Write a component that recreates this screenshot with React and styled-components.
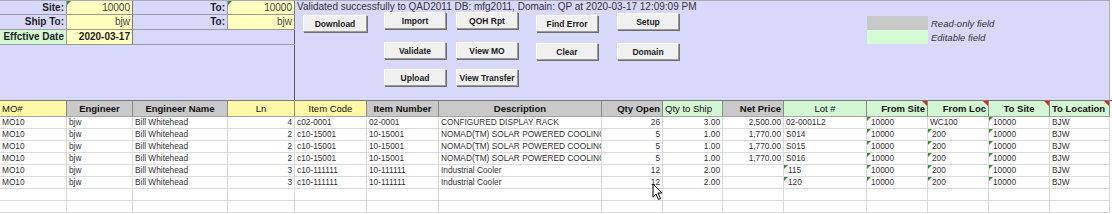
import React from "react";
import styled, { createGlobalStyle, css } from "styled-components";

const GlobalStyle = createGlobalStyle`
  body {
    margin: 0;
    background: #fff;
    font-family: "Liberation Sans", Arial, sans-serif;
    color: #333;
  }
`;

const tones = {
  yellow: "#fff8a6",
  gray: "#c9c9c9",
  green: "#d3f7d3",
};

const columns = [
  { key: "mo", label: "MO#", w: 67, tone: "yellow", align: "left" },
  { key: "eng", label: "Engineer", w: 66, tone: "gray", align: "center", bold: true },
  { key: "name", label: "Engineer Name", w: 95, tone: "gray", align: "center", bold: true },
  { key: "ln", label: "Ln", w: 67, tone: "yellow", align: "center", num: true },
  { key: "code", label: "Item Code", w: 72, tone: "yellow", align: "center" },
  { key: "item", label: "Item Number", w: 72, tone: "gray", align: "center", bold: true },
  { key: "desc", label: "Description", w: 163, tone: "gray", align: "center", bold: true },
  { key: "open", label: "Qty Open", w: 61, tone: "gray", align: "right", bold: true, num: true },
  { key: "ship", label: "Qty to Ship", w: 60, tone: "green", align: "left", num: true },
  { key: "price", label: "Net Price", w: 61, tone: "gray", align: "right", bold: true, num: true },
  { key: "lot", label: "Lot #", w: 83, tone: "green", align: "center" },
  { key: "fromSite", label: "From Site", w: 61, tone: "green", align: "right", bold: true, note: true },
  { key: "fromLoc", label: "From Loc", w: 61, tone: "green", align: "right", bold: true, note: true },
  { key: "toSite", label: "To Site", w: 61, tone: "green", align: "center", bold: true, note: true },
  { key: "toLoc", label: "To Location", w: 60, tone: "green", align: "left", bold: true, note: true },
];

const cooling = "NOMAD(TM) SOLAR POWERED COOLING";

const rows = [
  { mo: "MO10", eng: "bjw", name: "Bill Whitehead", ln: "4", code: "c02-0001", item: "02-0001", desc: "CONFIGURED DISPLAY RACK", open: "26", ship: "3.00", price: "2,500.00", lot: "02-0001L2", fromSite: "10000", fromLoc: "WC100", toSite: "10000", toLoc: "BJW" },
  { mo: "MO10", eng: "bjw", name: "Bill Whitehead", ln: "2", code: "c10-15001", item: "10-15001", desc: cooling, open: "5", ship: "1.00", price: "1,770.00", lot: "S014", fromSite: "10000", fromLoc: "200", toSite: "10000", toLoc: "BJW" },
  { mo: "MO10", eng: "bjw", name: "Bill Whitehead", ln: "2", code: "c10-15001", item: "10-15001", desc: cooling, open: "5", ship: "1.00", price: "1,770.00", lot: "S015", fromSite: "10000", fromLoc: "200", toSite: "10000", toLoc: "BJW" },
  { mo: "MO10", eng: "bjw", name: "Bill Whitehead", ln: "2", code: "c10-15001", item: "10-15001", desc: cooling, open: "5", ship: "1.00", price: "1,770.00", lot: "S016", fromSite: "10000", fromLoc: "200", toSite: "10000", toLoc: "BJW" },
  { mo: "MO10", eng: "bjw", name: "Bill Whitehead", ln: "3", code: "c10-111111", item: "10-111111", desc: "Industrial Cooler", open: "12", ship: "2.00", price: "", lot: "115", fromSite: "10000", fromLoc: "200", toSite: "10000", toLoc: "BJW" },
  { mo: "MO10", eng: "bjw", name: "Bill Whitehead", ln: "3", code: "c10-111111", item: "10-111111", desc: "Industrial Cooler", open: "12", ship: "2.00", price: "", lot: "120", fromSite: "10000", fromLoc: "200", toSite: "10000", toLoc: "BJW" },
  {},
  {},
];

// numbers stored as text get the little green corner
const textFlag = (key, value) =>
  ["lot", "fromSite", "fromLoc", "toSite"].includes(key) && /^\d+$/.test(value || "");

const buttons = [
  { label: "Download", col: 1, row: 1, w: 64, drop: 3 },
  { label: "Import", col: 2, row: 1 },
  { label: "QOH Rpt", col: 3, row: 1 },
  { label: "Find Error", col: 4, row: 1, drop: 3 },
  { label: "Setup", col: 5, row: 1, drop: 1 },
  { label: "Validate", col: 2, row: 2 },
  { label: "View MO", col: 3, row: 2 },
  { label: "Clear", col: 4, row: 2, drop: 1 },
  { label: "Domain", col: 5, row: 2, drop: 1 },
  { label: "Upload", col: 2, row: 3 },
  { label: "View Transfer", col: 3, row: 3 },
];

const gridCols = columns.map(c => `${c.w}px`).join(" ");

const App = () => {
  return (
    <>
      <GlobalStyle />
      <Sheet>
        <Panel>
          <FormPanel>
            <FormCell>Site:</FormCell>
            <InputCell $flag>10000</InputCell>
            <FormCell>To:</FormCell>
            <InputCell $flag>10000</InputCell>

            <FormCell>Ship To:</FormCell>
            <InputCell>bjw</InputCell>
            <FormCell>To:</FormCell>
            <InputCell>bjw</InputCell>

            <FormCell $green>Effctive Date</FormCell>
            <InputCell $bold>2020-03-17</InputCell>
            <FormCell $span={2} />
          </FormPanel>

          <ActionPanel>
            <Status>
              Validated successfully to QAD2011 DB: mfg2011, Domain: QP at 2020-03-17 12:09:09 PM
            </Status>
            <ActionBody>
              <ButtonGrid>
                {buttons.map(b => (
                  <SheetButton
                    key={b.label}
                    $col={b.col}
                    $row={b.row}
                    $w={b.w || 62}
                    $drop={b.drop || 0}
                  >
                    {b.label}
                  </SheetButton>
                ))}
              </ButtonGrid>
              <Legend>
                <Swatch $color="#c8c8c8" />
                <LegendText>Read-only field</LegendText>
                <Swatch $color="#d4fbd4" />
                <LegendText>Editable field</LegendText>
              </Legend>
            </ActionBody>
          </ActionPanel>
        </Panel>

        <Table>
          <HeadRow>
            {columns.map(c => (
              <HeadCell
                key={c.key}
                $tone={c.tone}
                $align={c.align}
                $bold={c.bold}
                $note={c.note}
              >
                {c.label}
              </HeadCell>
            ))}
          </HeadRow>
          {rows.map((r, i) => (
            <DataRow key={i}>
              {columns.map(c => (
                <DataCell
                  key={c.key}
                  $num={c.num}
                  $flag={textFlag(c.key, r[c.key])}
                >
                  {r[c.key]}
                </DataCell>
              ))}
            </DataRow>
          ))}
        </Table>

        <Cursor width="12" height="18" viewBox="0 0 12 18">
          <path
            d="M1 1 L1 14 L4 11 L6.5 16.5 L8.5 15.5 L6 10 L10 10 Z"
            fill="#fff"
            stroke="#000"
            strokeWidth="1"
            strokeLinejoin="round"
          />
        </Cursor>
      </Sheet>
    </>
  );
};

export default App;

const Sheet = styled.div`
  position: relative;
  width: 1112px;
  height: 214px;
  overflow: hidden;
  background: #fff;
`;

const Panel = styled.div`
  display: flex;
  width: 1110px;
  height: 100px;
  box-sizing: border-box;
  background: #d8d8fb;
  border-top: 1px solid #a9a9b8;
  border-right: 1px solid #b4b4c0;
`;

const FormPanel = styled.div`
  display: grid;
  grid-template-columns: 67px 66px 95px 67px;
  grid-template-rows: 14px 15px 15px;
  align-content: start;
  width: 295px;
  height: 100%;
  box-sizing: border-box;
  border-right: 1px solid #5a5a66;
`;

const FormCell = styled.div`
  grid-column: span ${props => props.$span || 1};
  box-sizing: border-box;
  padding: 0 2px;
  border-right: 1px solid #9a9aaa;
  border-bottom: 1px solid #9a9aaa;
  background: ${props => (props.$green ? "#d4fad4" : "transparent")};
  font-size: 10px;
  font-weight: bold;
  line-height: 13px;
  text-align: right;
  color: #1e1e1e;
  white-space: nowrap;
  &:last-child {
    border-right: none;
  }
`;

const InputCell = styled.div`
  position: relative;
  box-sizing: border-box;
  padding: 0 2px;
  border-right: 1px solid #7d7d6a;
  border-bottom: 1px solid #9a9a88;
  background: #ffffbf;
  font-size: 10px;
  font-weight: ${props => (props.$bold ? "bold" : "normal")};
  line-height: 13px;
  text-align: right;
  color: ${props => (props.$bold ? "#1e1e1e" : "#4a4a4a")};
  ${props =>
    props.$flag &&
    css`
      &::before {
        content: "";
        position: absolute;
        top: 0;
        left: 0;
        border-top: 4px solid #2f8f2f;
        border-right: 4px solid transparent;
      }
    `}
`;

const ActionPanel = styled.div`
  display: flex;
  flex-direction: column;
  flex: 1;
  padding-left: 2px;
`;

const Status = styled.div`
  height: 11px;
  font-size: 10px;
  line-height: 11px;
  color: #333;
  white-space: nowrap;
`;

const ActionBody = styled.div`
  display: flex;
  align-items: flex-start;
  padding-left: 6px;
`;

const ButtonGrid = styled.div`
  display: grid;
  grid-template-columns: 81px 72px 80px 81px 62px;
  grid-template-rows: 30px 27px 17px;
  align-items: start;
`;

const SheetButton = styled.button`
  grid-column: ${props => props.$col};
  grid-row: ${props => props.$row};
  width: ${props => props.$w}px;
  height: 17px;
  margin-top: ${props => props.$drop}px;
  padding: 0;
  box-sizing: border-box;
  background: #f0f0f0;
  border: 1px solid;
  border-color: #ffffff #9a9a9a #9a9a9a #ffffff;
  box-shadow: 1px 1px 0 #6e6e6e;
  font-family: "Liberation Sans", Arial, sans-serif;
  font-size: 8.5px;
  font-weight: bold;
  color: #1a1a1a;
  cursor: pointer;
`;

const Legend = styled.div`
  display: grid;
  grid-template-columns: 61px auto;
  grid-template-rows: 14px 14px;
  align-items: center;
  margin-left: 188px;
  margin-top: 4px;
`;

const Swatch = styled.div`
  height: 100%;
  background: ${props => props.$color};
`;

const LegendText = styled.div`
  padding-left: 3px;
  font-size: 9.5px;
  font-style: italic;
  color: #333;
  white-space: nowrap;
`;

const Table = styled.div`
  display: flex;
  flex-direction: column;
`;

const HeadRow = styled.div`
  display: grid;
  grid-template-columns: ${gridCols};
  border-top: 1px solid #7a7a7a;
`;

const HeadCell = styled.div`
  position: relative;
  height: 16px;
  box-sizing: border-box;
  padding: 0 2px;
  background: ${props => tones[props.$tone]};
  border-right: 1px solid #8a8a8a;
  border-bottom: 1px solid #a6a6a6;
  font-size: 9.5px;
  font-weight: ${props => (props.$bold ? "bold" : "normal")};
  line-height: 15px;
  text-align: ${props => props.$align};
  color: #111;
  white-space: nowrap;
  overflow: hidden;
  ${props =>
    props.$note &&
    css`
      &::after {
        content: "";
        position: absolute;
        top: 0;
        right: 0;
        border-top: 5px solid #e5231d;
        border-left: 5px solid transparent;
      }
    `}
`;

const DataRow = styled.div`
  display: grid;
  grid-template-columns: ${gridCols};
`;

const DataCell = styled.div`
  position: relative;
  height: 12px;
  box-sizing: border-box;
  padding: 0 2px;
  border-right: 1px solid #dadada;
  border-bottom: 1px solid #dadada;
  font-size: 8.3px;
  line-height: 11px;
  text-align: ${props => (props.$num ? "right" : "left")};
  color: #333;
  white-space: nowrap;
  overflow: hidden;
  ${props =>
    props.$flag &&
    css`
      padding-left: 4px;
      &::before {
        content: "";
        position: absolute;
        top: 0;
        left: 0;
        border-top: 4px solid #2f8f2f;
        border-right: 4px solid transparent;
      }
    `}
`;

const Cursor = styled.svg`
  position: absolute;
  left: 652px;
  top: 183px;
  pointer-events: none;
`;
